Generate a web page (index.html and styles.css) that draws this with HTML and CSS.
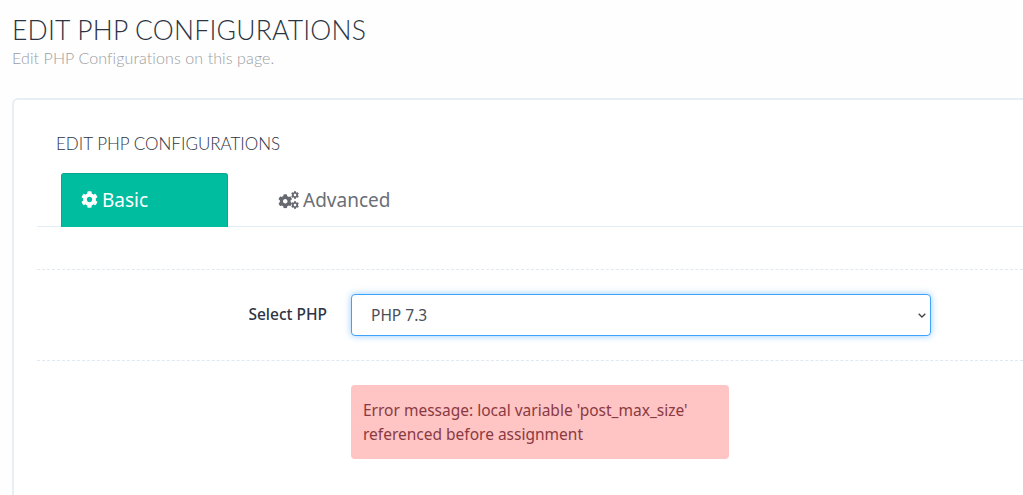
FILE: index.html
```html
<!DOCTYPE html>
<html lang="en">
<head>
  <meta charset="UTF-8" />
  <meta name="viewport" content="width=device-width, initial-scale=1.0" />
  <title>Edit PHP Configurations</title>
  <link rel="stylesheet" href="styles.css">
</head>
<body>
  <svg class="defs" width="0" height="0">
    <symbol id="cog" viewBox="0 0 512 512">
      <path d="M487.4 315.7l-42.6-24.6c4.3-23.2 4.3-47 0-70.2l42.6-24.6c4.9-2.8 7.1-8.6 5.5-14-11.1-35.6-30-67.8-54.7-94.6-3.8-4.1-10-5.1-14.8-2.3L380.8 110c-17.9-15.4-38.5-27.3-60.8-35.1V25.8c0-5.6-3.9-10.5-9.4-11.7-36.7-8.2-74.3-7.8-109.2 0-5.5 1.2-9.4 6.1-9.4 11.7V75c-22.2 7.9-42.8 19.8-60.8 35.1L88.7 85.5c-4.9-2.8-11-1.9-14.8 2.3-24.7 26.7-43.6 58.9-54.7 94.6-1.7 5.4.6 11.2 5.5 14L67.3 221c-4.3 23.2-4.3 47 0 70.2l-42.6 24.6c-4.9 2.8-7.1 8.6-5.5 14 11.1 35.6 30 67.8 54.7 94.6 3.8 4.1 10 5.1 14.8 2.3l42.6-24.6c17.9 15.4 38.5 27.3 60.8 35.1v49.2c0 5.6 3.9 10.5 9.4 11.7 36.7 8.2 74.3 7.8 109.2 0 5.5-1.2 9.4-6.1 9.4-11.7v-49.2c22.2-7.9 42.8-19.8 60.8-35.1l42.6 24.6c4.9 2.8 11 1.9 14.8-2.3 24.7-26.7 43.6-58.9 54.7-94.6 1.5-5.5-.7-11.3-5.6-14.1zM256 336c-44.1 0-80-35.9-80-80s35.9-80 80-80 80 35.9 80 80-35.9 80-80 80z"/>
    </symbol>
  </svg>

  <div class="page-head">
    <h2 class="page-title">EDIT PHP CONFIGURATIONS</h2>
    <p class="page-sub">Edit PHP Configurations on this page.</p>
  </div>

  <div class="card">
    <h3 class="card-title">EDIT PHP CONFIGURATIONS</h3>

    <div class="tabs">
      <a class="tab active">
        <svg class="icon" width="17" height="17"><use href="#cog"/></svg>
        Basic
      </a>
      <a class="tab">
        <svg class="icon" width="21" height="18" viewBox="0 0 21 18">
          <use href="#cog" x="0" y="3" width="14.5" height="14.5"/>
          <use href="#cog" x="13" y="0" width="8" height="8"/>
          <use href="#cog" x="13" y="10" width="8" height="8"/>
        </svg>
        Advanced
      </a>
    </div>

    <div class="form-row">
      <label class="form-label" for="phpSelect">Select PHP</label>
      <select class="form-select" id="phpSelect">
        <option>PHP 7.3</option>
      </select>
    </div>

    <div class="message-row">
      <div class="alert">Error message: local variable 'post_max_size' referenced before assignment</div>
    </div>
  </div>
</body>
</html>
```

FILE: styles.css
```css
html,
body {
  height: 100%;
  overflow: hidden;
}

body {
  display: flex;
  flex-direction: column;
  box-sizing: border-box;
  margin: 0;
  padding: 0 0 0 12px;
  background-color: #fefefe;
  font-family: "Noto Sans", sans-serif;
}

.defs {
  position: absolute;
}

.page-head {
  padding-top: 14px;
}

.page-title {
  margin: 0;
  font-family: Lato, sans-serif;
  font-size: 26.5px;
  font-weight: 300;
  line-height: 32px;
  color: #2c3444;
  letter-spacing: 0.2px;
  white-space: nowrap;
}

.page-sub {
  margin: 0;
  font-family: Lato, sans-serif;
  font-size: 16px;
  font-weight: 300;
  line-height: 23px;
  color: #9a9da2;
  letter-spacing: 0.1px;
}

.card {
  flex: 1;
  margin-top: 29px;
  padding-left: 23px;
  background-color: #fff;
  border-top: 2px solid #e6eef6;
  border-left: 2px solid #e6eef6;
  border-top-left-radius: 6px;
}

.card-title {
  margin: 0;
  padding: 32px 0 0 19px;
  font-family: Lato, sans-serif;
  font-size: 17px;
  font-weight: 300;
  line-height: 24px;
  color: #2c3444;
  white-space: nowrap;
}

.tabs {
  display: flex;
  height: 53px;
  margin-top: 17px;
  padding-left: 24px;
  border-bottom: 1px solid #e3ebf4;
}

.tab {
  display: flex;
  align-items: center;
  gap: 4px;
  height: 54px;
  box-sizing: border-box;
  padding: 0 0 0 50px;
  font-size: 19px;
  color: #6b6f76;
}

.tab .icon {
  fill: #666a70;
}

.tab.active {
  width: 167px;
  padding: 0 0 2px 19px;
  background-color: #00bda0;
  border: 1px solid #0aa78f;
  border-bottom: 0;
  border-radius: 3px 3px 0 0;
  color: #fff;
}

.tab.active .icon {
  fill: #fff;
}

.form-row {
  display: flex;
  align-items: flex-start;
  height: 66px;
  margin-top: 42px;
  padding-top: 24px;
  border-top: 1px dashed #e0e8f0;
  border-bottom: 1px dashed #e0e8f0;
}

.form-label {
  width: 290px;
  line-height: 40px;
  text-align: right;
  font-size: 15.5px;
  font-weight: 500;
  color: #2c3444;
}

.form-select {
  appearance: none;
  width: 580px;
  height: 42px;
  margin-left: 24px;
  padding: 0 12px 0 19px;
  box-sizing: border-box;
  background: #fff url("data:image/svg+xml,%3Csvg xmlns='http://www.w3.org/2000/svg' width='8' height='5'%3E%3Cpath d='M.7.7 4 4 7.3.7' fill='none' stroke='%23444' stroke-width='1.3'/%3E%3C/svg%3E") no-repeat right 4px center;
  border: 1px solid #3fa3fb;
  border-radius: 4px;
  box-shadow: 0 0 7px rgba(63, 163, 251, 0.55);
  font-family: "Noto Sans", sans-serif;
  font-size: 15.5px;
  color: #495057;
  outline: none;
}

.message-row {
  padding: 24px 0 0 314px;
}

.alert {
  width: 378px;
  box-sizing: border-box;
  padding: 13px 12px;
  background-color: #ffc4c4;
  border-radius: 4px;
  font-size: 15.5px;
  line-height: 24px;
  color: #8a3a42;
}
```
